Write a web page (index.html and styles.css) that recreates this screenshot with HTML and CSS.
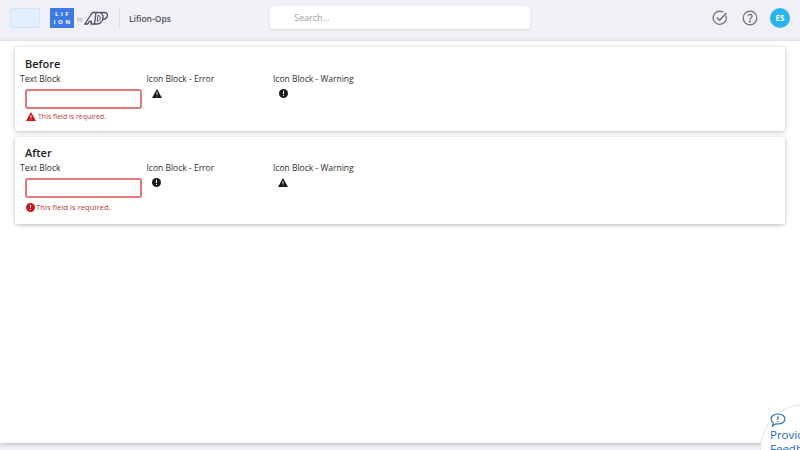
FILE: index.html
```html
<!DOCTYPE html>
<html lang="en">
<head>
<meta charset="utf-8">
<title>Lifion-Ops</title>
<link rel="stylesheet" href="styles.css">
</head>
<body>
<header class="topbar">
  <div class="brand">
    <div class="placeholder"></div>
    <div class="lifion"><span>LIF</span><span>ION</span></div>
    <span class="by">by</span>
    <svg class="adp" width="24" height="14" viewBox="0 0 24 14" fill="none" stroke="#4f5262" stroke-width="1.300">
      <path d="M.8 13 8.500 1.500h3.500L10.500 13H7.200l.3-2.500H5.200L3.600 13Z"/>
      <path d="M12 1.500h2.500c3.300 0 5 2.300 4.500 5.500-.6 3.500-2.800 6-6.200 6h-2.300"/>
      <path d="M14 4.500 13.200 10.200c2 .2 2.900-1.300 3-2.900.1-1.800-.6-2.800-2.200-2.800Z" stroke-width="1"/>
      <path d="M16.500 1.500h3.800c2.600 0 3.400 1.600 3 3.500-.4 1.900-2 3.200-4.300 3.200h-.8"/>
    </svg>
    <div class="divider"></div>
    <span class="app-name">Lifion-Ops</span>
  </div>
  <div class="search">Search...</div>
  <div class="actions">
    <svg class="action-icon" width="16" height="16" viewBox="0 0 16 16" fill="none" stroke="#6a6d76" stroke-width="1.200">
      <path d="M13.900 5.500A6.600 6.600 0 1 1 11.200 2.200"/>
      <path d="M4.800 7.500 7.600 10.300 14.300 3" stroke-width="1.400"/>
    </svg>
    <svg class="action-icon" width="16" height="16" viewBox="0 0 16 16" fill="none" stroke="#6a6d76" stroke-width="1.200">
      <circle cx="8" cy="8" r="6.800"/>
      <path d="M5.900 6.300C6 5 6.900 4.300 8 4.300c1.200 0 2.100.8 2.100 1.900 0 1.700-2.100 1.700-2.100 3.400"/>
      <circle cx="8" cy="11.500" r=".5" fill="#6a6d76"/>
    </svg>
    <div class="avatar">ES</div>
  </div>
</header>

<main class="content">
  <section class="card card-before">
    <h2>Before</h2>
    <div class="columns">
      <div class="col">
        <div class="label">Text Block</div>
        <div class="input"></div>
        <div class="error">
          <svg width="10" height="9" viewBox="0 0 10 9"><path d="M5 0 10 9H0Z" fill="#c8161d"/><path d="M4.600 3h.8v3h-.8zM4.600 6.700h.8v.8h-.8z" fill="#fff"/></svg>
          <span>This field is required.</span>
        </div>
      </div>
      <div class="col">
        <div class="label">Icon Block - Error</div>
        <svg class="ico tri" width="10" height="9" viewBox="0 0 10 9"><path d="M5 0 10 9H0Z" fill="#1a1a1a"/><path d="M4.600 3h.8v3h-.8zM4.600 6.700h.8v.8h-.8z" fill="#fff"/></svg>
      </div>
      <div class="col">
        <div class="label">Icon Block - Warning</div>
        <svg class="ico" width="9" height="9" viewBox="0 0 9 9"><circle cx="4.500" cy="4.500" r="4.500" fill="#1a1a1a"/><path d="M4 1.800h1v3.200H4zM4 5.900h1v1H4z" fill="#fff"/></svg>
      </div>
    </div>
  </section>
  <section class="card card-after">
    <h2>After</h2>
    <div class="columns">
      <div class="col">
        <div class="label">Text Block</div>
        <div class="input"></div>
        <div class="error error-round">
          <svg width="9" height="9" viewBox="0 0 9 9"><circle cx="4.500" cy="4.500" r="4.500" fill="#c8161d"/><path d="M4 1.800h1v3.200H4zM4 5.900h1v1H4z" fill="#fff"/></svg>
          <span>This field is required.</span>
        </div>
      </div>
      <div class="col">
        <div class="label">Icon Block - Error</div>
        <svg class="ico" width="9" height="9" viewBox="0 0 9 9"><circle cx="4.500" cy="4.500" r="4.500" fill="#1a1a1a"/><path d="M4 1.800h1v3.200H4zM4 5.900h1v1H4z" fill="#fff"/></svg>
      </div>
      <div class="col">
        <div class="label">Icon Block - Warning</div>
        <svg class="ico tri" width="10" height="9" viewBox="0 0 10 9"><path d="M5 0 10 9H0Z" fill="#1a1a1a"/><path d="M4.600 3h.8v3h-.8zM4.600 6.700h.8v.8h-.8z" fill="#fff"/></svg>
      </div>
    </div>
  </section>
</main>

<aside class="feedback">
  <svg width="16" height="15" viewBox="0 0 16 15" fill="none" stroke="#1f66b5" stroke-width="1.100">
    <path d="M8 1C4 1 1 3.200 1 6c0 1.500.8 2.800 2.200 3.700L2.500 13l3.400-2.200c.7.100 1.400.2 2.100.2 4 0 7-2.200 7-5S12 1 8 1Z"/>
    <path d="M8 3.300v3.500M8 8v1" stroke-width="1.200"/>
  </svg>
  <div class="feedback-text">Provide<br>Feedback</div>
</aside>
</body>
</html>
```
FILE: styles.css
```css
* { box-sizing: border-box; }
html, body { margin: 0; height: 100%; }
body {
  width: 800px;
  height: 450px;
  overflow: hidden;
  position: relative;
  background: #f0f0f6;
  font-family: "Open Sans", "Noto Sans", sans-serif;
  color: #2b2b2b;
}
.topbar {
  height: 41px;
  display: flex;
  align-items: center;
  justify-content: space-between;
  padding: 0 10px 5px 10px;
  position: relative;
}
.brand { display: flex; align-items: center; width: 260px; }
.placeholder {
  width: 30px;
  height: 20px;
  background: #e2efff;
  border: 1px solid #d6e3f2;
  border-radius: 2px;
}
.lifion {
  width: 24px;
  height: 20px;
  margin-left: 10px;
  padding-left: 2px;
  background: #3d7ae8;
  color: #fff;
  font-size: 6px;
  font-weight: 700;
  line-height: 8px;
  letter-spacing: 2.500px;
  display: flex;
  flex-direction: column;
  align-items: center;
  justify-content: center;
}
.by { font-size: 5px; color: #8a8fa0; margin: 2px 0 0 3px; width: 7px; }
.adp { display: block; }
.divider { width: 1px; height: 20px; background: #dcdce3; margin-left: 11px; }
.app-name { font-size: 8.500px; font-weight: 600; color: #50535f; margin-left: 9px; }
.search {
  position: absolute;
  left: 270px;
  top: 6px;
  width: 260px;
  height: 23px;
  background: #fff;
  border-radius: 3px;
  box-shadow: 0 1px 2px rgba(0, 0, 0, .12);
  padding-left: 24px;
  font-size: 9px;
  line-height: 23px;
  color: #a0a2aa;
}
.actions { display: flex; align-items: center; gap: 14px; }
.action-icon { display: block; }
.avatar {
  width: 20px;
  height: 20px;
  margin-left: -2px;
  border-radius: 50%;
  background: #26b5ec;
  color: #fff;
  font-size: 8px;
  font-weight: 700;
  line-height: 20px;
  text-align: center;
}
.content {
  height: 402px;
  background: #fff;
  padding: 6px 15px 0;
  box-shadow: 0 1px 4px rgba(0, 0, 0, .25);
  display: flex;
  flex-direction: column;
  gap: 6px;
}
.card {
  background: #fff;
  border-radius: 2px;
  box-shadow: 0 1px 4px rgba(0, 0, 0, .28);
  padding: 9px 5px 0;
}
.card-before { height: 84px; }
.card-after { height: 87px; padding-top: 8px; }
h2 {
  margin: 0 0 0 5px;
  font-size: 11px;
  line-height: 15px;
  font-weight: 600;
  color: #1c1c1c;
}
.columns { display: flex; }
.col { width: 126.500px; }
.label { font-size: 8.500px; line-height: 12px; color: #2e2e2e; margin-top: 2px; }
.input {
  width: 117px;
  height: 20px;
  margin: 4px 0 0 5px;
  border: 2px solid #e4777a;
  border-radius: 3px;
  background: #fff;
}
.error {
  display: flex;
  align-items: center;
  gap: 2px;
  margin: 2px 0 0 6px;
  font-size: 7px;
  line-height: 11px;
  color: #b3373c;
}
.error-round { font-size: 7.700px; margin-top: 4px; }
.error-round svg { margin-right: -1px; }
.ico { display: block; margin: 4px 0 0 5px; }
.col:nth-child(3) .ico { margin-left: 6px; }
.col:nth-child(3) .ico.tri { margin-left: 5px; }
.feedback {
  position: absolute;
  left: 760px;
  top: 404px;
  width: 90px;
  height: 90px;
  border-radius: 50%;
  background: #fff;
  border: 1px solid #e3e3e8;
  padding: 8px 0 0 9px;
  color: #1f66b5;
}
.feedback svg { display: block; }
.feedback-text { font-size: 11.500px; line-height: 14px; }
```
